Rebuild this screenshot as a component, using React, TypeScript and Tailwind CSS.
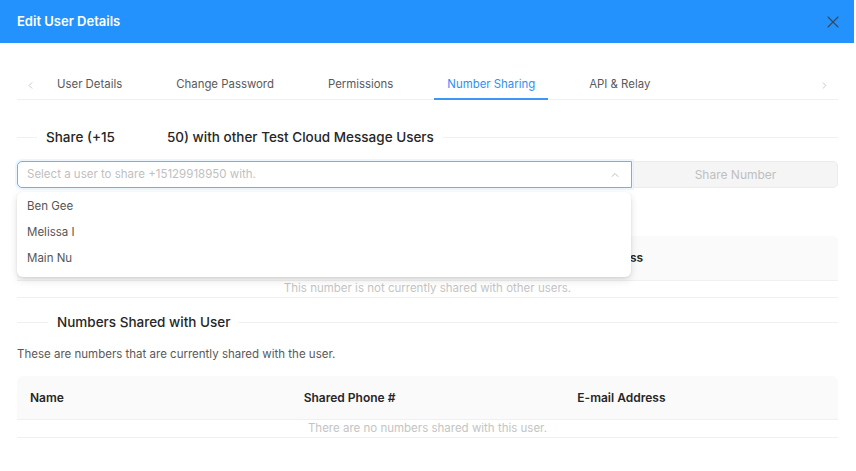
import { X, ChevronUp, ChevronLeft, ChevronRight } from 'lucide-react'

const TABS = ['User Details', 'Change Password', 'Permissions', 'Number Sharing', 'API & Relay']
const USERS = ['Ben Gee', 'Melissa I', 'Main Nu']

function SectionDivider({ lead, children }: { lead: string; children: React.ReactNode }) {
  return (
    <div className="flex items-center h-[20px]">
      <div className={`${lead} h-px bg-[#f0f0f0]`} />
      <div className="px-[9px] text-[13.5px] font-medium text-[#262626] whitespace-nowrap">{children}</div>
      <div className="flex-1 h-px bg-[#f0f0f0]" />
    </div>
  )
}

export default function App() {
  return (
    <div className="w-[856px] h-[471px] bg-white overflow-hidden" style={{ fontFamily: 'Inter, "Noto Sans", sans-serif' }}>
      {/* Modal header */}
      <div className="h-[43px] bg-[#2492fd] flex items-center justify-between pl-[17px] pr-[11px] mr-[2px]">
        <span className="text-[13px] font-semibold text-white">Edit User Details</span>
        <X size={20} strokeWidth={1.4} className="text-[#34495e]" />
      </div>

      <div className="pl-[17px] pr-[18px]">
        {/* Tabs */}
        <div className="mt-[23px] h-[34px] flex items-stretch border-b border-[#f0f0f0]">
          <div className="w-[27px] pt-[5px] flex items-center justify-center">
            <ChevronLeft size={11} className="text-[#c4c4c4]" />
          </div>
          <div className="flex-1 flex gap-[28px]">
            {TABS.map(t => {
              const active = t === 'Number Sharing'
              return (
                <div
                  key={t}
                  className={`px-[13px] pt-[5px] flex items-center text-[11.4px] border-b-2 -mb-px ${
                    active ? 'text-[#2f8ff5] border-[#3d95f5]' : 'text-[#595959] border-transparent'
                  }`}
                >
                  {t}
                </div>
              )
            })}
          </div>
          <div className="w-[27px] pt-[5px] flex items-center justify-center">
            <ChevronRight size={11} className="text-[#c4c4c4]" />
          </div>
        </div>

        {/* Share section */}
        <div className="mt-[27px]">
          <SectionDivider lead="w-[20px]">
            Share (+15<span className="inline-block w-[52px]" />50) with other Test Cloud Message Users
          </SectionDivider>
        </div>

        <div className="mt-[14px] relative flex h-[27px]">
          <div className="flex-1 flex items-center justify-between border border-[#69b1ff] rounded-l-[5px] pl-[9px] pr-[10px] shadow-[0_0_0_2px_rgba(5,145,255,0.08)]">
            <span className="text-[11.5px] text-[#bfbfbf]">Select a user to share +15129918950 with.</span>
            <ChevronUp size={12} className="text-[#bfbfbf]" />
          </div>
          <div className="w-[205px] ml-px flex items-center justify-center bg-[#f5f5f5] border border-[#ececec] rounded-r-[5px] text-[12px] text-[#bfbfbf]">
            Share Number
          </div>

          {/* Open dropdown */}
          <div className="absolute left-0 top-[31px] w-[614px] z-10 bg-white rounded-[6px] pt-[2px] pb-[5px] shadow-[0_3px_8px_rgba(0,0,0,0.12),0_1px_3px_rgba(0,0,0,0.08)]">
            {USERS.map(u => (
              <div key={u} className="h-[26px] flex items-center px-[10px] text-[11.5px] text-[#555]">
                {u}
              </div>
            ))}
          </div>
        </div>

        {/* Table of users this number is shared with (mostly under the dropdown) */}
        <div className="mt-[48px]">
          <div className="grid grid-cols-[262px_263px_1fr] h-[45px] items-center bg-[#fafafa] rounded-t-[6px] text-[12px] font-semibold text-[#262626] border-b border-[#f0f0f0]">
            <div className="px-[13px]" />
            <div className="px-[13px]" />
            <div className="px-[13px]">E-mail Address</div>
          </div>
          <div className="h-[17px] flex items-center justify-center text-[11.5px] text-[#c4c4c4] border-b border-[#f0f0f0]">
            This number is not currently shared with other users.
          </div>
        </div>

        {/* Shared with user section */}
        <div className="mt-[14px]">
          <SectionDivider lead="w-[31px]">Numbers Shared with User</SectionDivider>
        </div>

        <p className="mt-[14px] h-[16px] text-[11.5px] text-[#595959]">These are numbers that are currently shared with the user.</p>

        <div className="mt-[14px]">
          <div className="grid grid-cols-3 h-[44px] items-center bg-[#fafafa] rounded-t-[6px] text-[12px] font-semibold text-[#262626] border-b border-[#f0f0f0]">
            <div className="px-[13px]">Name</div>
            <div className="px-[13px]">Shared Phone #</div>
            <div className="px-[13px]">E-mail Address</div>
          </div>
          <div className="h-[18px] flex items-center justify-center text-[11.5px] text-[#c4c4c4] border-b border-[#f0f0f0]">
            There are no numbers shared with this user.
          </div>
        </div>
      </div>
    </div>
  )
}
